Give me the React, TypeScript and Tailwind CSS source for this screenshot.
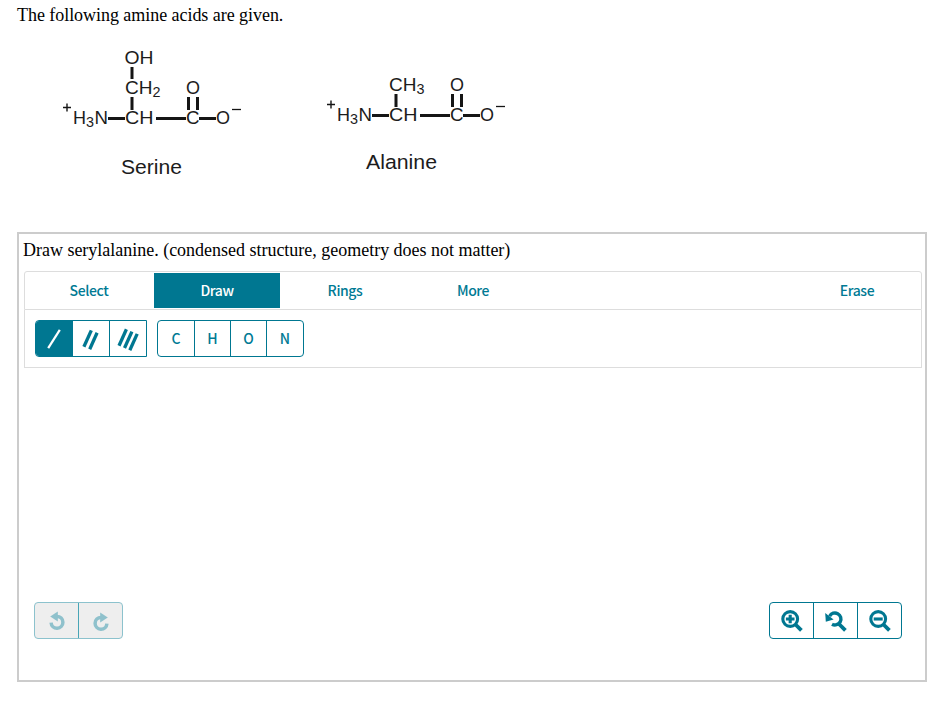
import { useState } from 'react'
import type { ReactNode } from 'react'

const tabs = ['Select', 'Draw', 'Rings', 'More']
const atoms = ['C', 'H', 'O', 'N']

// Offsets of every stroke in a bond icon, from the icon's centre
const bondStrokes: Record<number, [number, number][]> = {
  1: [[0, 0]],
  2: [[-3.4, -0.4], [2.4, 2]],
  3: [[-5.3, -1.5], [0.2, 0.8], [5.5, 3.1]],
}

interface LabelProps {
  x: number
  y: number
  width: number
  size?: number
  children: ReactNode
}

function Label({ x, y, width, size = 18, children }: LabelProps) {
  return (
    <text x={x} y={y} fontSize={size} textLength={width} lengthAdjust="spacingAndGlyphs">
      {children}
    </text>
  )
}

// Part shared by both amino acids, drawn from the nitrogen to the carboxylate
function Backbone() {
  return (
    <>
      <path d="M63 107.5h8M67 103.5v8" strokeWidth="1.4" />
      <Label x={73} y={124} width={13}>H</Label>
      <Label x={86} y={127} width={8} size={14}>3</Label>
      <Label x={94.5} y={124} width={13.5}>N</Label>
      <Label x={125} y={124} width={28.5}>CH</Label>
      <Label x={186} y={124} width={13.5}>C</Label>
      <Label x={186} y={94} width={14}>O</Label>
      <Label x={216} y={124} width={14}>O</Label>
      <path d="M108 118.5h17M156 118.5h30M199 118.5h17" strokeWidth="3" />
      <path d="M132 97v13M188.5 97v13M197.5 97v13" strokeWidth="3" />
      <path d="M232 109.5h9" strokeWidth="1.3" />
    </>
  )
}

function Molecules() {
  return (
    <svg width="937" height="160" viewBox="0 40 937 160" fill="#1c1c1c" stroke="none" className="block [font-family:'Liberation_Sans',Arial,sans-serif] [&_path]:stroke-[#151515]">
      <Label x={124.5} y={64} width={29}>OH</Label>
      <path d="M132 67v12" strokeWidth="3" />
      <Label x={125} y={94} width={27.5}>CH</Label>
      <Label x={152.5} y={97} width={8} size={14}>2</Label>
      <Backbone />
      <Label x={121} y={174} width={61} size={20.5}>Serine</Label>
      <g transform="translate(264 -3)">
        <Backbone />
        <Label x={125} y={94} width={27.5}>CH</Label>
        <Label x={152.5} y={97} width={8} size={14}>3</Label>
      </g>
      <Label x={366} y={168.5} width={71} size={20.5}>Alanine</Label>
    </svg>
  )
}

function BondIcon({ count }: { count: number }) {
  const [dx, dy] = count === 1 ? [5.8, 9.2] : [3.7, 8.2]
  return (
    <svg width="26" height="26" viewBox="-13 -13 26 26" fill="none" stroke="currentColor" strokeWidth={count === 1 ? 2.2 : 3.3}>
      {bondStrokes[count].map(([x, y]) => (
        <path key={x} d={`M${x - dx} ${y + dy}L${x + dx} ${y - dy}`} />
      ))}
    </svg>
  )
}

function RotateIcon({ flip = false }: { flip?: boolean }) {
  return (
    <svg width="16" height="20" viewBox="0 0 16 20" className={flip ? 'mt-0.5 -scale-x-100' : ''}>
      <path d="M8 5.4A5.9 5.9 0 1 1 2.1 11.6" fill="none" stroke="currentColor" strokeWidth="3.5" />
      <path d="M1.2 5.4L8.8 .6V10.4Z" fill="currentColor" />
    </svg>
  )
}

function ZoomIcon({ kind }: { kind: 'in' | 'reset' | 'out' }) {
  return (
    <svg width="22" height="22" viewBox="0 0 22 22" fill="none" stroke="currentColor">
      {kind === 'reset' ? (
        <>
          <path d="M4.6 6.2A6 6 0 1 1 7 14.2" strokeWidth="3.4" />
          <path d="M.2 3L.8 11.8L8.6 9.6Z" fill="currentColor" stroke="none" />
        </>
      ) : (
        <>
          <circle cx="9.2" cy="9" r="7.4" strokeWidth="3.1" />
          <path d={kind === 'in' ? 'M4.9 9h8.6M9.2 4.7v8.6' : 'M4.7 9h9'} strokeWidth="3.1" />
        </>
      )}
      <path d="M14 14L20.4 20.4" strokeWidth="3.8" />
    </svg>
  )
}

export default function App() {
  const [tab, setTab] = useState('Draw')
  const [bond, setBond] = useState(1)

  return (
    <main className="h-[704px] w-[937px] overflow-hidden bg-white text-black [font-family:'Liberation_Serif','Times_New_Roman',serif]">
      <p className="h-10 pt-1 pl-[17px] text-[18px] leading-[22px] tracking-[-0.045px]">The following amine acids are given.</p>
      <Molecules />

      <section className="mt-8 ml-[17px] flex h-[450px] w-[910px] flex-col border-2 border-[#ccc]">
        <p className="h-[37px] pt-[5px] pl-1 text-[18px] leading-[22px] tracking-[-0.015px]">
          Draw serylalanine. (condensed structure, geometry does not matter)
        </p>

        <div className="ml-[5px] w-[898px] text-[14px] text-[#007a94] [font-family:'Noto_Sans_CJK_SC',sans-serif]">
          <nav className="flex h-[39px] gap-0.5 rounded-t-[3px] border border-[#ddd] px-px pt-px">
            {tabs.map((name) => (
              <button
                key={name}
                type="button"
                onClick={() => setTab(name)}
                className={`h-[35px] w-[126px] font-medium tracking-[-0.4px] ${tab === name ? 'bg-[#007791] text-white' : ''}`}
              >
                {name}
              </button>
            ))}
            <button type="button" className="ml-auto h-[35px] w-[126px] font-medium tracking-[-0.4px]">Erase</button>
          </nav>
          <div className="flex h-[58px] gap-2.5 border border-t-0 border-[#ddd] px-2.5 pt-2.5">
            <div className="flex h-[37px] w-[112px] overflow-hidden rounded-l-[4px] border border-[#007791]">
              {[1, 2, 3].map((count) => (
                <button
                  key={count}
                  type="button"
                  onClick={() => setBond(count)}
                  className={`flex flex-1 items-center justify-center border-l border-[#007791] first:border-l-0 ${bond === count ? 'bg-[#007791] text-white' : 'text-[#007791]'}`}
                >
                  <BondIcon count={count} />
                </button>
              ))}
            </div>
            <div className="flex h-[37px] w-[147px] rounded-[4px] border border-[#007791]">
              {atoms.map((atom) => (
                <button key={atom} type="button" className="w-9 border-l border-[#007791] font-medium first:border-l-0 last:flex-1">
                  {atom}
                </button>
              ))}
            </div>
          </div>
        </div>

        <div className="mt-auto mb-[41px] flex justify-between pr-[23px] pl-[15px]">
          <div className="flex h-[37px] w-[89px] rounded-[4px] border border-[#8cc2cd] bg-[#eee] text-[#8fc1cc]">
            <button type="button" disabled className="flex flex-1 items-center justify-center border-r border-[#48a5b6]"><RotateIcon /></button>
            <button type="button" disabled className="flex flex-1 items-center justify-center"><RotateIcon flip /></button>
          </div>
          <div className="flex h-[37px] w-[133px] rounded-[4px] border border-[#007791] text-[#007791]">
            <button type="button" className="flex flex-1 items-center justify-center"><ZoomIcon kind="in" /></button>
            <button type="button" className="flex flex-1 items-center justify-center border-x border-[#007791]"><ZoomIcon kind="reset" /></button>
            <button type="button" className="flex flex-1 items-center justify-center"><ZoomIcon kind="out" /></button>
          </div>
        </div>
      </section>
    </main>
  )
}
